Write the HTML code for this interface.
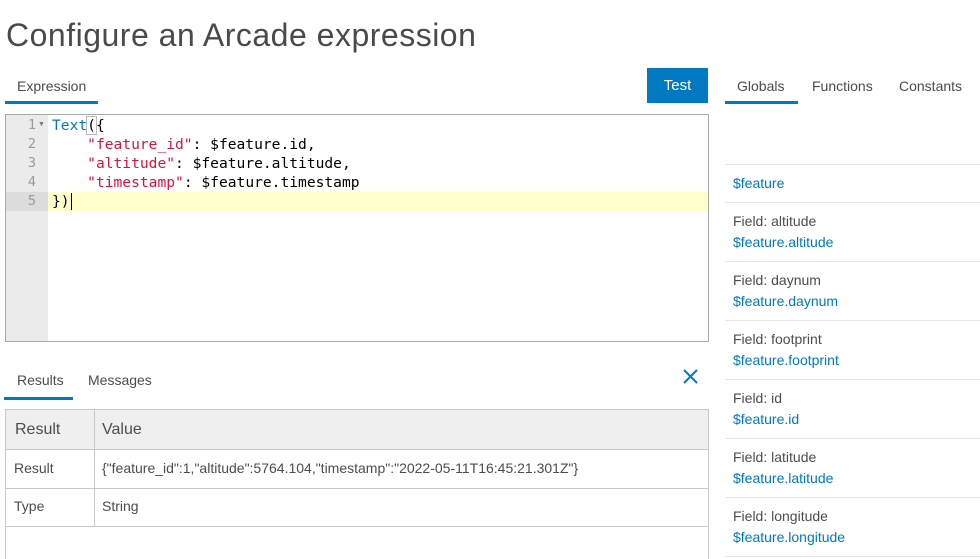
<!DOCTYPE html>
<html><head><meta charset="utf-8"><style>
*{margin:0;padding:0;box-sizing:border-box}
body{width:980px;height:557px;overflow:hidden;background:#fff;font-family:"Liberation Sans",sans-serif;color:#4c4c4c;position:relative}
.a{position:absolute;white-space:nowrap}
.t{font-size:14px;line-height:16px}
.u{position:absolute;height:3px;background:#0079c1}
.code{font-family:"DejaVu Sans Mono","Liberation Mono",monospace;font-size:14.6px;line-height:19px}
.hl{position:absolute;left:725px;width:255px;height:1px;background:#e6e6e6}
.blue{color:#0079c1}
</style></head><body>
<div class="a" style="left:6px;top:17px;font-size:32px;line-height:36px;color:#4a4a4a;letter-spacing:0.5px">Configure an Arcade expression</div>

<div class="a t" style="left:17px;top:78px">Expression</div>
<div class="u" style="left:5px;top:101px;width:93px"></div>
<div class="a" style="left:647px;top:68px;width:61px;height:35px;background:#0079c1;color:#fff;font-size:15px;line-height:35px;text-align:center">Test</div>

<div class="a" style="left:5px;top:114px;width:704px;height:228px;border:1px solid #a9a9a9;background:#fff"></div>
<div class="a" style="left:6px;top:115px;width:42px;height:226px;background:#ebebeb"></div>
<div class="a" style="left:6px;top:192px;width:42px;height:19px;background:#dcdcdc"></div>
<div class="a" style="left:48px;top:192px;width:660px;height:19px;background:#ffffcc"></div>
<div class="a code" style="left:6px;top:116px;width:30px;text-align:right;color:#999;font-size:13.5px">1<br>2<br>3<br>4<br>5</div>
<div class="a" style="left:38px;top:121px;font-size:7px;color:#777">▼</div>
<div class="a code" style="left:52px;top:116px;color:#000"><span class="blue">Text</span><span style="outline:1px solid #bbb">(</span>{<br>&nbsp;&nbsp;&nbsp;&nbsp;<span style="color:#d7153a">"feature_id"</span>: $feature.id,<br>&nbsp;&nbsp;&nbsp;&nbsp;<span style="color:#d7153a">"altitude"</span>: $feature.altitude,<br>&nbsp;&nbsp;&nbsp;&nbsp;<span style="color:#d7153a">"timestamp"</span>: $feature.timestamp<br>})</div>
<div class="a" style="left:71px;top:193px;width:1px;height:17px;background:#000"></div>

<div class="a t" style="left:17px;top:372px">Results</div>
<div class="u" style="left:4px;top:397px;width:69px"></div>
<div class="a t" style="left:88px;top:372px">Messages</div>
<svg class="a" style="left:683px;top:369px" width="15" height="15" viewBox="0 0 15 15"><path d="M1 1L14 14M14 1L1 14" stroke="#0079c1" stroke-width="2"/></svg>

<div class="a" style="left:5px;top:409px;width:704px;height:150px;border:1px solid #c8c8c8;border-bottom:none"></div>
<div class="a" style="left:6px;top:410px;width:702px;height:40px;background:#efefef;border-bottom:1px solid #c8c8c8"></div>
<div class="a" style="left:6px;top:488px;width:702px;height:1px;background:#c8c8c8"></div>
<div class="a" style="left:6px;top:526px;width:702px;height:1px;background:#c8c8c8"></div>
<div class="a" style="left:94px;top:410px;width:1px;height:116px;background:#c8c8c8"></div>
<div class="a" style="left:15px;top:421px;font-size:16px;line-height:18px">Result</div>
<div class="a" style="left:102px;top:421px;font-size:16px;line-height:18px">Value</div>
<div class="a t" style="left:14px;top:460px">Result</div>
<div class="a t" style="left:102px;top:460px">{"feature_id":1,"altitude":5764.104,"timestamp":"2022-05-11T16:45:21.301Z"}</div>
<div class="a t" style="left:14px;top:498px">Type</div>
<div class="a t" style="left:102px;top:498px">String</div>

<div class="a t" style="left:737px;top:78px">Globals</div>
<div class="u" style="left:725px;top:101px;width:73px"></div>
<div class="a t" style="left:812px;top:78px">Functions</div>
<div class="a t" style="left:899px;top:78px">Constants</div>

<div class="hl" style="top:164px"></div>
<div class="a t blue" style="left:733px;top:175px">$feature</div>
<div class="hl" style="top:202px"></div>
<div class="a t" style="left:733px;top:213px">Field: altitude</div>
<div class="a t blue" style="left:733px;top:234px">$feature.altitude</div>
<div class="hl" style="top:261px"></div>
<div class="a t" style="left:733px;top:272px">Field: daynum</div>
<div class="a t blue" style="left:733px;top:293px">$feature.daynum</div>
<div class="hl" style="top:320px"></div>
<div class="a t" style="left:733px;top:331px">Field: footprint</div>
<div class="a t blue" style="left:733px;top:352px">$feature.footprint</div>
<div class="hl" style="top:379px"></div>
<div class="a t" style="left:733px;top:390px">Field: id</div>
<div class="a t blue" style="left:733px;top:411px">$feature.id</div>
<div class="hl" style="top:438px"></div>
<div class="a t" style="left:733px;top:449px">Field: latitude</div>
<div class="a t blue" style="left:733px;top:470px">$feature.latitude</div>
<div class="hl" style="top:497px"></div>
<div class="a t" style="left:733px;top:508px">Field: longitude</div>
<div class="a t blue" style="left:733px;top:529px">$feature.longitude</div>
<div class="hl" style="top:556px"></div>
</body></html>
